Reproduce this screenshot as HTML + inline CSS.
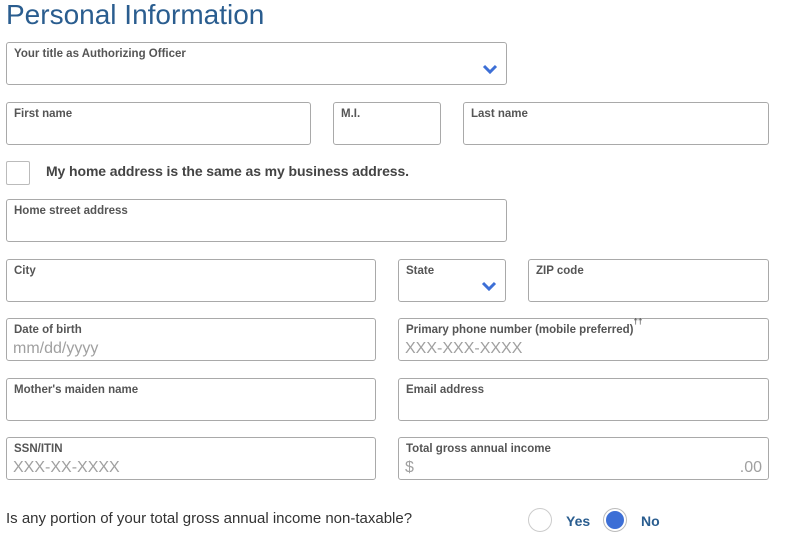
<!DOCTYPE html>
<html><head><style>
body{margin:0;width:800px;height:554px;background:#fff;font-family:"Liberation Sans",sans-serif;position:relative;overflow:hidden}
.b{position:absolute;border:1px solid #a9a9a9;border-radius:3px;box-sizing:border-box;height:43px}
.l{position:absolute;left:7px;top:4px;font-size:11.5px;font-weight:bold;color:#555;line-height:14px}
.p{position:absolute;left:6px;top:21px;font-size:16px;color:#a0a0a0}
.chev{position:absolute;right:8px;bottom:10px}
sup{font-size:8px;line-height:0;vertical-align:top;position:relative;top:-1px}
</style></head><body>
<div style="position:absolute;left:6px;top:-1px;font-size:28px;color:#2a5d8f">Personal Information</div>
<div class="b" style="left:6px;top:42px;width:501px"><span class="l">Your title as Authorizing Officer</span><svg class="chev" width="16" height="10" viewBox="0 0 16 10"><path d="M2 2l6 6 6-6" fill="none" stroke="#3d6fd6" stroke-width="3"/></svg></div>
<div class="b" style="left:6px;top:102px;width:305px"><span class="l">First name</span></div>
<div class="b" style="left:333px;top:102px;width:108px"><span class="l">M.I.</span></div>
<div class="b" style="left:463px;top:102px;width:306px"><span class="l">Last name</span></div>
<div style="position:absolute;left:6px;top:161px;width:24px;height:24px;border:1px solid #bbb;border-radius:2px;box-sizing:border-box"></div>
<div style="position:absolute;left:46px;top:163px;font-size:14px;font-weight:bold;color:#444;letter-spacing:-0.1px">My home address is the same as my business address.</div>
<div class="b" style="left:6px;top:199px;width:501px"><span class="l">Home street address</span></div>
<div class="b" style="left:6px;top:259px;width:370px"><span class="l">City</span></div>
<div class="b" style="left:398px;top:259px;width:108px"><span class="l">State</span><svg class="chev" width="16" height="10" viewBox="0 0 16 10"><path d="M2 2l6 6 6-6" fill="none" stroke="#3d6fd6" stroke-width="3"/></svg></div>
<div class="b" style="left:528px;top:259px;width:241px"><span class="l">ZIP code</span></div>
<div class="b" style="left:6px;top:318px;width:370px"><span class="l">Date of birth</span><span class="p">mm/dd/yyyy</span></div>
<div class="b" style="left:398px;top:318px;width:371px"><span class="l">Primary phone number (mobile preferred)<sup>††</sup></span><span class="p">XXX-XXX-XXXX</span></div>
<div class="b" style="left:6px;top:378px;width:370px"><span class="l">Mother's maiden name</span></div>
<div class="b" style="left:398px;top:378px;width:371px"><span class="l">Email address</span></div>
<div class="b" style="left:6px;top:437px;width:370px"><span class="l">SSN/ITIN</span><span class="p">XXX-XX-XXXX</span></div>
<div class="b" style="left:398px;top:437px;width:371px"><span class="l">Total gross annual income</span><span class="p">$</span><span class="p" style="left:auto;right:6px">.00</span></div>
<div style="position:absolute;left:6px;top:510px;font-size:15px;color:#333">Is any portion of your total gross annual income non-taxable?</div>
<div style="position:absolute;left:528px;top:508px;width:24px;height:24px;border:1px solid #ccc;border-radius:50%;box-sizing:border-box"></div>
<div style="position:absolute;left:566px;top:513px;font-size:14px;font-weight:bold;color:#2a5d8f">Yes</div>
<div style="position:absolute;left:603px;top:508px;width:24px;height:24px;border:1px solid #bbb;border-radius:50%;box-sizing:border-box;background:#fff"><div style="position:absolute;left:2px;top:2px;width:18px;height:18px;border-radius:50%;background:#3d6fd6"></div></div>
<div style="position:absolute;left:641px;top:513px;font-size:14px;font-weight:bold;color:#2a5d8f">No</div>
</body></html>
